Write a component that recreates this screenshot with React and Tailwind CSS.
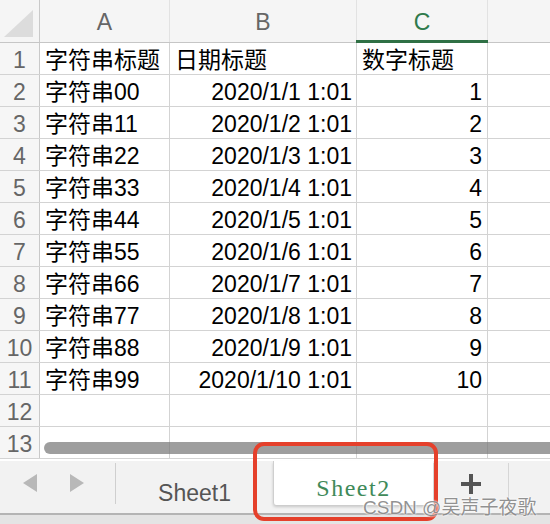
import React from 'react';

const cols = [
  { key: 'A', width: 130 },
  { key: 'B', width: 187 },
  { key: 'C', width: 131, active: true },
  { key: 'D', width: 140 },
];

const rows = [
  ['字符串标题', '日期标题', '数字标题', true],
  ...Array.from({ length: 10 }, (_, i) => [
    `字符串${i}${i}`,
    `2020/1/${i + 1} 1:01`,
    String(i + 1),
    false,
  ]),
  ['', '', '', false],
  ['', '', '', false],
];

const font = { fontFamily: '"Liberation Sans", "Noto Sans CJK SC", sans-serif' };

function HeaderRow() {
  return (
    <div className="flex h-[43px] border-b border-[#c6c6c6] bg-[#f5f5f5]">
      <div className="relative w-[40px] shrink-0 border-r border-[#c9c9c9]">
        {/* select-all corner */}
        <div
          className="absolute left-[4px] top-[10px] h-[27px] w-[29px] bg-[#dcdcdc]"
          style={{ clipPath: 'polygon(100% 0, 100% 100%, 0 100%)' }}
        />
      </div>
      {cols.map((c) => (
        <div
          key={c.key}
          className={`relative flex shrink-0 items-center justify-center border-r border-[#e2e2e2] pt-[2px] text-[23px] ${
            c.active ? 'text-[#2f7a4c]' : 'text-[#666]'
          }`}
          style={{ width: c.width }}
        >
          {c.key}
          {c.active && <div className="absolute bottom-[-1px] left-[-1px] right-[-1px] h-[3px] bg-[#2f7045]" />}
        </div>
      ))}
    </div>
  );
}

function Row({ n, cells }) {
  const [a, b, c, head] = cells;
  return (
    <div className="flex h-[32px] border-b border-[#d3d3d3] pt-[3px] text-[23px] text-black">
      <div className="-mt-[3px] flex w-[40px] shrink-0 items-center justify-center border-r border-[#c9c9c9] bg-[#f6f6f6] pt-[3px] text-[#666]">
        {n}
      </div>
      <div className="-mt-[3px] flex w-[130px] shrink-0 items-center border-r border-[#d3d3d3] pl-[5px] pt-[3px] whitespace-nowrap">
        {a}
      </div>
      <div
        className={`-mt-[3px] flex w-[187px] shrink-0 items-center border-r border-[#d3d3d3] pt-[3px] whitespace-nowrap ${
          head ? 'pl-[5px]' : 'justify-end pr-[4px]'
        }`}
      >
        {b}
      </div>
      <div
        className={`-mt-[3px] flex w-[131px] shrink-0 items-center border-r border-[#d3d3d3] pt-[3px] whitespace-nowrap ${
          head ? 'pl-[5px]' : 'justify-end pr-[5px]'
        }`}
      >
        {c}
      </div>
      <div className="w-[140px] shrink-0" />
    </div>
  );
}

function TabBar() {
  return (
    <div className="flex h-[54px] border-b-2 border-[#b4b4b4] bg-[#f2f2f2]">
      <div className="flex w-[115px] shrink-0 items-center gap-[33px] pb-[8px] pl-[23px]">
        <div className="h-0 w-0 border-y-[9px] border-r-[14px] border-y-transparent border-r-[#b8b8b8]" />
        <div className="h-0 w-0 border-y-[9px] border-l-[14px] border-y-transparent border-l-[#b8b8b8]" />
      </div>
      <div className="mb-[9px] mt-[2px] w-px bg-[#cfcfcf]" />
      <div className="flex w-[157px] shrink-0 items-center justify-center pt-[12px] text-[23px] text-[#555]">
        Sheet1
      </div>
      <div className="mb-[8px] flex w-[160px] shrink-0 items-center justify-center rounded-b-[3px] border-l border-[#cfcfcf] bg-white pt-[10px] shadow-[0_2px_3px_rgba(0,0,0,0.18)]">
        <span className="text-[24px] text-[#3f8a5a]" style={{ fontFamily: '"Liberation Serif", serif', letterSpacing: '1.5px' }}>
          Sheet2
        </span>
      </div>
      <div className="mb-[9px] mt-[2px] w-px bg-[#d6d6d6]" />
      <div className="flex w-[74px] shrink-0 items-center justify-center pb-[6px]">
        <div className="relative h-[20px] w-[20px]">
          <div className="absolute left-0 top-[8px] h-[4px] w-[20px] bg-[#555]" />
          <div className="absolute left-[8px] top-0 h-[20px] w-[4px] bg-[#555]" />
        </div>
      </div>
      <div className="mb-[9px] mt-[2px] w-px bg-[#d6d6d6]" />
    </div>
  );
}

export default function App() {
  return (
    <div className="relative h-[524px] w-[550px] overflow-hidden bg-[#e4e4e4]" style={font}>
      <div className="h-[461px] overflow-hidden bg-white">
        <HeaderRow />
        {rows.map((r, i) => (
          <Row key={i} n={i + 1} cells={r} />
        ))}
      </div>
      <TabBar />

      {/* horizontal scroll thumb */}
      <div className="absolute left-[44px] right-[-10px] top-[442px] h-[12px] rounded-full bg-[rgba(120,120,120,0.72)]" />

      {/* highlight box around the active tab */}
      <div className="absolute left-[253px] top-[442px] h-[79px] w-[185px] rounded-[11px] border-[4px] border-[#e5402b]" />

      <div
        className="absolute left-[363px] top-[494px] text-[19px] text-[rgba(110,110,110,0.75)] whitespace-nowrap"
        style={{ textShadow: '0 0 2px #fff, 0 0 2px #fff' }}
      >
        CSDN @吴声子夜歌
      </div>
    </div>
  );
}
